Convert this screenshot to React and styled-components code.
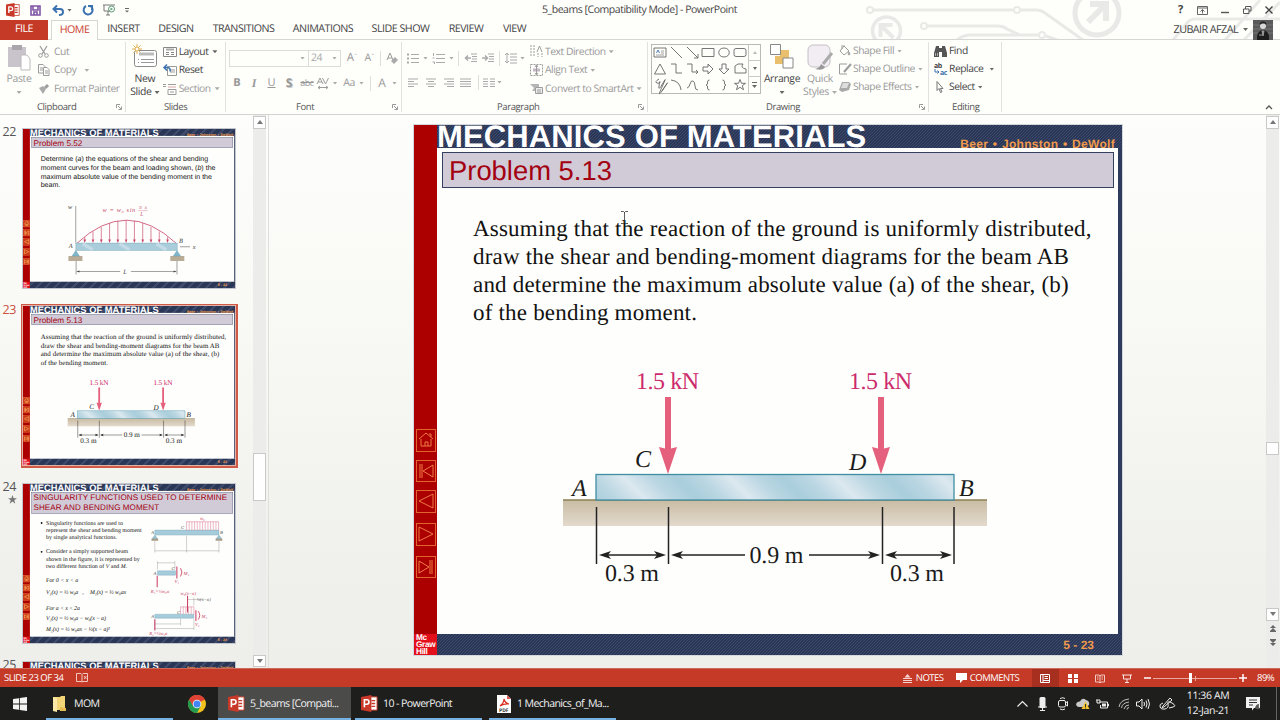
import React from 'react';
import styled, { createGlobalStyle } from 'styled-components';

const GlobalStyle = createGlobalStyle`
  * { box-sizing: border-box; }
  body {
    margin: 0;
    overflow: hidden;
    font-family: 'Open Sans', 'Noto Sans', sans-serif;
    color: #444;
    text-rendering: geometricPrecision;
  }
  svg { display: block; flex: none; overflow: visible; }
`;

const Window = styled.div`
  width: 1280px;
  height: 720px;
  display: flex;
  flex-direction: column;
  background: #fefefb;
  position: relative;
  overflow: hidden;
`;

/* ---------- shared bits ---------- */

const Caret = styled.span`
  flex: none;
  width: 5px;
  height: 3px;
  margin-left: ${(p) => p.$ml || 0}px;
  background: ${(p) => (p.$on ? '#666' : '#ababab')};
  clip-path: polygon(0 0, 100% 0, 50% 100%);
`;

const Text = styled.span`
  white-space: nowrap;
  font-size: ${(p) => p.$size || 11}px;
  letter-spacing: ${(p) => p.$ls || 0}px;
  line-height: 14px;
`;

const Icon = ({ w = 14, h = 14, children, color = '#9c9c9c', sw = 1 }) => (
  <svg width={w} height={h} viewBox={`0 0 ${w} ${h}`} fill="none" stroke={color} strokeWidth={sw}>
    {children}
  </svg>
);

/* ---------- title bar and tabs ---------- */

const Circuit = styled.svg`
  position: absolute;
  left: 860px;
  top: 0;
  && { overflow: hidden; }
`;

const TitleBar = styled.div`
  height: 20px;
  display: flex;
  align-items: center;
  position: relative;
`;

const QuickAccess = styled.div`
  width: 535px;
  padding-left: 6px;
  display: flex;
  align-items: center;
`;

const Slot = styled.div`
  width: ${(p) => p.$w}px;
  height: ${(p) => (p.$h ? `${p.$h}px` : 'auto')};
  flex: none;
  display: flex;
  align-items: center;
  justify-content: ${(p) => p.$justify || 'flex-start'};
`;

const DocTitle = styled.div`
  width: 209px;
  text-align: center;
  font-size: 10.5px;
  letter-spacing: -0.46px;
  line-height: 18px;
  white-space: nowrap;
`;

const WindowButtons = styled.div`
  margin-left: auto;
  display: flex;
  align-items: center;
  padding-right: 7px;
`;

const TabBar = styled.div`
  height: 20px;
  display: flex;
  position: relative;
  border-bottom: 1px solid #d6d6d4;
`;

const Tab = styled.div`
  width: ${(p) => p.$w}px;
  height: 20px;
  line-height: 19px;
  text-align: center;
  font-size: 10.7px;
  letter-spacing: ${(p) => p.$ls ?? -0.5}px;
  white-space: nowrap;
  color: #444;
`;

const FileTab = styled(Tab)`
  background: #c43a27;
  color: #fff;
  margin-right: 3px;
`;

const ActiveTab = styled(Tab)`
  color: #cb3f2f;
  background: #fefefb;
  border: 1px solid #d6d6d4;
  border-bottom: none;
  line-height: 18px;
`;

const Account = styled.div`
  margin-left: auto;
  display: flex;
  align-items: center;
  padding-right: 7px;
`;

/* ---------- ribbon ---------- */

const Ribbon = styled.div`
  height: 75px;
  flex: none;
  display: flex;
  border-bottom: 1px solid #d3d3d1;
  position: relative;
`;

const Group = styled.div`
  width: ${(p) => p.$w}px;
  height: 74px;
  display: flex;
  flex-direction: column;
  position: relative;
  &::after {
    content: '';
    position: absolute;
    right: 0;
    top: 2px;
    height: 70px;
    border-right: 1px solid #e1e1df;
  }
`;

const GroupBody = styled.div`
  height: 60px;
  display: flex;
  padding-left: ${(p) => p.$pl}px;
`;

const GroupFoot = styled.div`
  height: 14px;
  display: flex;
  align-items: center;
  justify-content: space-between;
  padding: 0 4px 0 ${(p) => p.$pl}px;
  font-size: 9.5px;
  line-height: 14px;
  letter-spacing: -0.4px;
  color: #555;
`;

const BigButton = styled.div`
  width: ${(p) => p.$w}px;
  height: 60px;
  padding-top: 4px;
  display: flex;
  flex-direction: column;
  align-items: center;
  font-size: 10.4px;
  line-height: 13px;
  letter-spacing: -0.35px;
  color: ${(p) => (p.$on ? '#444' : '#999')};
  > svg { margin-bottom: 2px; }
`;

const Line = styled.div`
  display: flex;
  align-items: center;
  white-space: nowrap;
  min-height: ${(p) => p.$h || 13}px;
`;

const Stack = styled.div`
  width: ${(p) => p.$w}px;
  padding-top: ${(p) => p.$pt ?? 2.5}px;
  margin-left: ${(p) => p.$ml || 0}px;
`;

const Command = styled.div`
  height: ${(p) => p.$h || 18.5}px;
  display: flex;
  align-items: center;
  gap: ${(p) => p.$gap ?? 3}px;
  font-size: 10.3px;
  letter-spacing: ${(p) => p.$ls ?? -0.45}px;
  white-space: nowrap;
  color: ${(p) => (p.$on ? '#444' : '#999')};
`;

const ToolRow = styled.div`
  height: ${(p) => p.$h || 24}px;
  display: flex;
  align-items: center;
  color: #999;
`;

const Combo = styled.div`
  width: ${(p) => p.$w}px;
  height: 17px;
  border: 1px solid #dcdcda;
  margin-right: -1px;
  padding: 0 3px 0 2px;
  display: flex;
  align-items: center;
  justify-content: space-between;
  font-size: 11px;
  color: #aaa;
`;

const Sep = styled.span`
  width: 1px;
  height: 15px;
  background: #dededc;
`;

const Glyph = styled.span`
  font-size: ${(p) => p.$size || 11}px;
  font-weight: ${(p) => (p.$bold ? 700 : 400)};
  font-style: ${(p) => (p.$italic ? 'italic' : 'normal')};
  font-family: ${(p) => (p.$serif ? "'Liberation Serif', serif" : 'inherit')};
  text-decoration: ${(p) => p.$deco || 'none'};
  line-height: 14px;
  letter-spacing: ${(p) => p.$ls || 0}px;
  text-shadow: ${(p) => (p.$shadow ? '1px 1px 0 #ccc' : 'none')};
`;

const Gallery = styled.div`
  width: 110px;
  height: 50px;
  margin-top: 4px;
  border: 1px solid #b9b9b7;
  display: flex;
`;

const GalleryScroll = styled.div`
  width: 12px;
  display: grid;
  grid-template-rows: repeat(3, 1fr);
  div {
    border-left: 1px solid #c9c9c7;
    border-bottom: 1px solid #c9c9c7;
    display: flex;
    align-items: center;
    justify-content: center;
  }
  div:last-child { border-bottom: none; }
`;

const Collapse = styled.div`
  margin-left: auto;
  padding: 65px 8px 0 0;
`;

const Launcher = () => (
  <Icon w={6} h={6} color="#999">
    <path d="M.5 4V.5H4M2 2l3 3M5.5 2.5v3h-3" />
  </Icon>
);

const lines = (ys, x1 = 1, x2 = 11) => ys.map((y) => `M${x1} ${y}H${x2}`).join('');

const PowerPointIcon = ({ size = 14 }) => (
  <svg width={size} height={size} viewBox="0 0 18 18">
    <path d="M9 2h8v14H9z" fill="#fff" stroke="#c43a27" />
    <path d="M11 6h4M11 9h4M11 12h4" stroke="#c43a27" strokeWidth="1.4" />
    <path d="M0 2l11-2v18L0 16z" fill="#c8392a" />
    <path d="M3.6 13V5h2.500a2.300 2.300 0 010 4.800H3.600" fill="none" stroke="#fff" strokeWidth="1.700" />
  </svg>
);

function Header() {
  return (
    <>
      <Circuit width="420" height="39" fill="none" stroke="#e9e9e7" strokeWidth="3">
        <path d="M13 10H153M161 10h16q4 0 8 3l38 27M67 26h71q5 0 9 3l13 6h20M186 36l14 5M96 41q6-6 14-6h68" />
        <path d="M313 40l14-17q3-4 8-4h85M365 40l35-40M384 40l36-38" />
        <circle cx="10" cy="10" r="3" strokeWidth="2" />
        <circle cx="157" cy="10" r="3" strokeWidth="2" fill="#fefefb" />
        <circle cx="64" cy="26" r="3" strokeWidth="2" fill="#fefefb" />
        <circle cx="182" cy="35" r="3" strokeWidth="2" fill="#fefefb" />
        <g transform="translate(26.500 31)">
          <circle r="14" fill="#fefefb" strokeWidth="3.500" />
          <path d="M7 7L-5-5M-6 6V-6H6" strokeWidth="4" />
        </g>
        <g transform="translate(237 13)">
          <circle r="22" fill="#fefefb" strokeWidth="5" />
          <path d="M-9 9L7-7M-7-9H9V8" strokeWidth="6" />
        </g>
      </Circuit>
      <TitleBar>
        <QuickAccess>
          <Slot $w={24}><PowerPointIcon /></Slot>
          <Slot $w={22}>
            <Icon w={11} h={11} color="#8055a5" sw={1.6}><path d="M1 1h9v9H1zM3 1v4h5V1M4 10V7h3v3" /></Icon>
          </Slot>
          <Slot $w={30}>
            <Icon w={12} h={11} color="#3b73b0" sw={2}><path d="M1.500 4H8q3 0 3 3t-4 3M5 0.500L1.500 4 5 7.500" /></Icon>
            <Caret $on $ml={3} />
          </Slot>
          <Slot $w={21}>
            <Icon w={12} h={12} color="#3b73b0" sw={2}><path d="M4 2A4.500 4.500 0 109 2.500M6 2h4v4" /></Icon>
          </Slot>
          <Slot $w={22}>
            <Icon w={13} h={12} color="#777"><path d="M0 1h12M1 1v6h6M5 7v4M3 11h4" /><circle cx="8.500" cy="5" r="3" stroke="#5c9b76" /><path d="M7.500 3.500L10 5 7.500 6.500z" fill="#5c9b76" stroke="none" /></Icon>
          </Slot>
          <Icon w={4} h={5} color="#666"><path d="M0 .5h4" /><path d="M0 2.500h4L2 4.500z" fill="#666" stroke="none" /></Icon>
        </QuickAccess>
        <DocTitle>5_beams [Compatibility Mode] - PowerPoint</DocTitle>
        <WindowButtons>
          <Slot $w={19}><Glyph $bold $size={11}>?</Glyph></Slot>
          <Slot $w={24}>
            <Icon w={11} h={9} color="#666"><path d="M.5.5h10v8H.5zM.5 2h10M5.500 7.500V3.500M3.500 5.500l2-2 2 2" /></Icon>
          </Slot>
          <Slot $w={22}><Icon w={9} h={7} color="#555" sw={1.4}><path d="M0 5.500h8" /></Icon></Slot>
          <Slot $w={22}>
            <Icon w={9} h={8} color="#555"><path d="M.5 3h5.500v4.500H.5zM2.500 3V.5H8v4.500H6" /></Icon>
          </Slot>
          <Icon w={8} h={8} color="#444" sw={1.4}><path d="M.5.5l7 7M7.500.5l-7 7" /></Icon>
        </WindowButtons>
      </TitleBar>
      <TabBar>
        <FileTab $w={48}>FILE</FileTab>
        <ActiveTab $w={47}>HOME</ActiveTab>
        <Tab $w={51}>INSERT</Tab>
        <Tab $w={54}>DESIGN</Tab>
        <Tab $w={81}>TRANSITIONS</Tab>
        <Tab $w={78}>ANIMATIONS</Tab>
        <Tab $w={77}>SLIDE SHOW</Tab>
        <Tab $w={54}>REVIEW</Tab>
        <Tab $w={43}>VIEW</Tab>
        <Account>
          <Text $size={10.8} $ls={-0.58}>ZUBAIR AFZAL</Text>
          <Caret $on $ml={5} />
          <svg width="20" height="20" viewBox="0 0 20 20" style={{ marginLeft: 5 }}>
            <rect width="20" height="20" fill="#5a5a5a" />
            <path d="M0 5h20M0 9h20M0 13h20" stroke="#747474" />
            <path d="M4 20q-1-9 6-10 7 1 6 10z" fill="#1d1d1d" />
            <circle cx="10" cy="6" r="3" fill="#d8d8d8" />
            <path d="M6.500 5q0-3.500 3.500-3.500t3.500 3.500l-2-1.500H9z" fill="#222" />
            <path d="M9 11l1 5 1-5zM6 15h3" fill="#aaa" stroke="#999" />
          </svg>
        </Account>
      </TabBar>
    </>
  );
}

const shapes = [
  <g key="a"><path d="M0 1h12v9H0z" /><path d="M7 4h3M7 6h3M2 8h8" stroke="#999" /><path d="M2.500 6L4 3l1.500 3" stroke="#3b6fb0" /></g>,
  'M1 0l11 11',
  'M1 0l11 11M12 7v4H8',
  'M0 1.500h12v8H0z',
  'M6 1c7 0 7 9 0 9s-7-9 0-9z',
  'M2 1.500h8q2 0 2 2v4q0 2-2 2H2q-2 0-2-2v-4q0-2 2-2z',
  'M6 1l5.500 10H.5z',
  'M1 1h5v9h6',
  'M1 1h5v8h6M10 7l2 2-2 2',
  'M1 4h5V1l5 5-5 5V8H1z',
  'M4 1h4v5h3l-5 5-5-5h3z',
  'M1 10V3l3-2h5Q6 5 12 6v4z',
  'M5 0Q0 3 3 4t3-1-1 4 4-3-1 4 2 1-2 3',
  'M1 1q9 1 10 10',
  'M1 9q2 0 3-4t3-3 2 5 3 4',
  'M7.500 1Q5.500 1 5.500 3v2L4 6l1.500 1v2q0 2 2 2',
  'M4.500 1q2 0 2 2v2L8 6 6.500 7v2q0 2-2 2',
  'M6 .5l1.500 3.800h4L8.300 6.700l1.200 4L6 8.300l-3.500 2.400 1.200-4L.5 4.300h4z',
];

function RibbonBar() {
  return (
    <Ribbon>
      <Group $w={126}>
        <GroupBody $pl={4}>
          <BigButton $w={30}>
            <svg width="24" height="27" viewBox="0 0 24 27">
              <path d="M1 3h18v20H1z" fill="#c9c4cc" />
              <path d="M5 1h10v5H5z" fill="#a9a6ab" />
              <path d="M14 11h6l3 4v11h-9z" fill="#fff" stroke="#bbb" />
            </svg>
            <Line>Paste</Line>
            <Line><Caret /></Line>
          </BigButton>
          <Stack $ml={4} $w={85}>
            <Command $gap={4}>
              <Icon w={12} h={12}><path d="M2 0l5 8M9 0L4 8" strokeWidth="1.300" /><circle cx="2.500" cy="9.500" r="1.800" /><circle cx="8.500" cy="9.500" r="1.800" /></Icon>
              Cut
            </Command>
            <Command $gap={4}>
              <Icon w={12} h={12}><path d="M.5.5H5l2 2V9H.5zM2 4h3M2 6h3" /><path d="M5.500 3.500H9l2 2v6H5.500z" fill="#fefefb" /><path d="M7 7h3M7 9h3" /></Icon>
              <span>Copy</span><Caret $ml={4} />
            </Command>
            <Command $gap={4}>
              <Icon w={12} h={12}><path d="M1 5l4-2 3 3-3 5z" fill="#aaa" stroke="none" /><path d="M7 5l3-3" strokeWidth="3" /></Icon>
              Format Painter
            </Command>
          </Stack>
        </GroupBody>
        <GroupFoot $pl={37}><span>Clipboard</span><Launcher /></GroupFoot>
      </Group>

      <Group $w={100}>
        <GroupBody $pl={3}>
          <BigButton $w={32} $on>
            <svg width="26" height="27" viewBox="0 0 26 27" fill="none">
              <rect x="2.500" y="6.500" width="22" height="16" rx="2" stroke="#8a8a8a" fill="#fff" />
              <path d="M7 10h15" stroke="#bbb" strokeWidth="3" />
              <path d="M6 15.500h1M9 15.500h13M6 18.500h1M9 18.500h13" stroke="#999" />
              <path d="M5 0v10M0 5h10M1.500 1.500l7 7M8.500 1.500l-7 7" stroke="#e3b04f" />
              <circle cx="5" cy="5" r="2" fill="#fff" stroke="#e3b04f" />
            </svg>
            <Line>New</Line>
            <Line>Slide<Caret $on $ml={3} /></Line>
          </BigButton>
          <Stack $ml={2} $w={64}>
            <Command $on $gap={2}>
              <Icon w={14} h={12} color="#888"><path d="M.5 1.500h13v9H.5z" /><path d="M3 3.500h8" strokeWidth="2" stroke="#aaa" /><path d="M3 6.500h3M3 8.500h3M8 6.500h3M8 8.500h3" /></Icon>
              <span>Layout</span><Caret $on $ml={2} />
            </Command>
            <Command $on $gap={2}>
              <Icon w={14} h={12} color="#999"><path d="M4.500 2.500h9v9h-9zM7 6h5M7 8h5" /><path d="M1 3.500h4q3 1 2 4M4 0.500l-3 3 3 3" stroke="#3b73b0" strokeWidth="1.500" /></Icon>
              Reset
            </Command>
            <Command $gap={2}>
              <Icon w={14} h={12}><path d="M0 1.500h3M5 1.500h8M0 3.500h3M5 6.500h8v5H5z" /><path d="M5 4h8" stroke="#d9a7a7" /><path d="M7 9h4" /></Icon>
              <span>Section</span><Caret $ml={2} />
            </Command>
          </Stack>
        </GroupBody>
        <GroupFoot $pl={38}><span>Slides</span></GroupFoot>
      </Group>

      <Group $w={176}>
        <GroupBody $pl={3}>
          <Stack $w={172} $pt={6}>
            <ToolRow>
              <Combo $w={80}><span /><Caret /></Combo>
              <Combo $w={33}><Text $size={10.5} $ls={-0.4}>24</Text><Caret /></Combo>
              <Slot $w={17} $justify="flex-end"><Glyph $size={11.5}>A</Glyph><Glyph $size={7}>ˆ</Glyph></Slot>
              <Slot $w={17} $justify="flex-end"><Glyph $size={10.5}>A</Glyph><Glyph $size={7}>ˇ</Glyph></Slot>
              <Slot $w={12} $justify="center"><Sep /></Slot>
              <Icon w={12} h={13}><path d="M1 8L4 1l3 7M2 6h4" /><path d="M5 9l4-4 3 3-4 4z" fill="#aaa" stroke="none" /></Icon>
            </ToolRow>
            <ToolRow $h={26}>
              <Slot $w={16} $justify="center"><Glyph $bold>B</Glyph></Slot>
              <Slot $w={18} $justify="center"><Glyph $italic $serif $bold $size={12}>I</Glyph></Slot>
              <Slot $w={17} $justify="center"><Glyph $deco="underline">U</Glyph></Slot>
              <Slot $w={18} $justify="center"><Glyph $bold $shadow $size={12}>S</Glyph></Slot>
              <Slot $w={18} $justify="center"><Glyph $deco="line-through" $size={9} $ls={-0.5}>abc</Glyph></Slot>
              <Slot $w={14} $justify="center">
                <Icon w={12} h={12}><path d="M0 7l3-6 3 6M1 5h4M5.500 1l3 6 3-6M1 10.500h10M3 9l-2 1.500L3 12M9 9l2 1.500L9 12" /></Icon>
              </Slot>
              <Slot $w={10} $justify="center"><Caret /></Slot>
              <Slot $w={18} $justify="center"><Glyph $size={10.5} $ls={-0.5}>Aa</Glyph></Slot>
              <Slot $w={8}><Caret $ml={1} /></Slot>
              <Slot $w={9} $justify="center"><Sep /></Slot>
              <Slot $w={14} $justify="center"><Glyph $size={12}>A</Glyph></Slot>
              <Slot $w={8} $justify="flex-end"><Caret /></Slot>
            </ToolRow>
          </Stack>
        </GroupBody>
        <GroupFoot $pl={70}><span>Font</span><Launcher /></GroupFoot>
      </Group>

      <Group $w={246}>
        <GroupBody $pl={5}>
          <Stack $w={122} $pt={6}>
            <ToolRow>
              <Slot $w={16}><Icon w={12} h={11} color="#aaa"><path d={lines([1.5, 5.5, 9.5], 4, 12)} /><path d="M0 1.500h2M0 5.500h2M0 9.500h2" strokeWidth="2" /></Icon></Slot>
              <Slot $w={9}><Caret /></Slot>
              <Slot $w={17}><Icon w={13} h={11} color="#aaa"><path d={lines([1.5, 5.5, 9.5], 4, 13)} /><path d="M1.500 0v3M0.500 5h2M0.500 9h2v2" /></Icon></Slot>
              <Slot $w={9}><Caret /></Slot>
              <Slot $w={7}><Sep /></Slot>
              <Slot $w={17}><Icon w={12} h={10} color="#aaa"><path d="M6 1h6M7 3.500h5M7 6h5M6 8.500h6" /><path d="M0 5h6M3 2.500L.5 5 3 7.500" strokeWidth="1.500" /></Icon></Slot>
              <Slot $w={17}><Icon w={12} h={10} color="#aaa"><path d="M6 1h6M7 3.500h5M7 6h5M6 8.500h6" /><path d="M0 5h5M3 2.500L5.500 5 3 7.500" strokeWidth="1.500" /></Icon></Slot>
              <Slot $w={6}><Sep /></Slot>
              <Slot $w={15}><Icon w={12} h={12} color="#aaa"><path d="M5 2h7M5 5h7M5 8h7M5 11h7M2 1v10M0 3l2-2 2 2M0 9l2 2 2-2" /></Icon></Slot>
              <Caret />
            </ToolRow>
            <ToolRow>
              <Slot $w={18}><Icon w={11} h={9} color="#aaa"><path d="M1 1h10M1 3.500h6M1 6h10M1 8.500h6" /></Icon></Slot>
              <Slot $w={18}><Icon w={11} h={9} color="#aaa"><path d="M1 1h10M3 3.500h6M1 6h10M3 8.500h6" /></Icon></Slot>
              <Slot $w={17}><Icon w={11} h={9} color="#aaa"><path d="M1 1h10M4 3.500h7M1 6h10M4 8.500h7" /></Icon></Slot>
              <Slot $w={18}><Icon w={11} h={9} color="#aaa"><path d="M0 1h11M0 3.500h11M0 6h11M0 8.500h11" /></Icon></Slot>
              <Slot $w={5}><Sep /></Slot>
              <Slot $w={14}><Icon w={12} h={9} color="#aaa"><path d="M0 1h5M0 3.500h5M0 6h5M0 8.500h5M7 1h5M7 3.500h5M7 6h5M7 8.500h5" /></Icon></Slot>
              <Caret />
            </ToolRow>
          </Stack>
          <Stack $w={116} $ml={1}>
            <Command $gap={2}>
              <Icon w={13} h={13}><path d="M1 0v12M4 0v12M8 8v4M12 8v4" strokeDasharray="2 1" /><path d="M7 7l2.500-6L12 7" /></Icon>
              <span>Text Direction</span><Caret $ml={1} />
            </Command>
            <Command $gap={2}>
              <Icon w={13} h={12}><path d="M.5.5h12v11H.5z" strokeDasharray="2 1" /><path d="M3 6h7" stroke="#c5b7c5" strokeWidth="3" /><path d="M6.500 1v10M5 3l1.500-2L8 3M5 9l1.500 2L8 9" /></Icon>
              <span>Align Text</span><Caret $ml={1} />
            </Command>
            <Command $gap={2} $ls={-0.4}>
              <Icon w={13} h={11}><path d="M0 1h9v3H5v4H2l2-3z" fill="#b5b5b5" stroke="none" /><path d="M5.500 4.500h7v6h-7z" fill="#eee" /><path d="M7 7h4M7 9h4" /></Icon>
              <span>Convert to SmartArt</span><Caret $ml={1} />
            </Command>
          </Stack>
        </GroupBody>
        <GroupFoot $pl={95}><span>Paragraph</span><Launcher /></GroupFoot>
      </Group>

      <Group $w={281}>
        <GroupBody $pl={3}>
          <Gallery>
            <svg width="96" height="48" viewBox="0 0 96 48" fill="none" stroke="#666" strokeWidth=".9">
              {shapes.map((d, i) => (
                <g key={i} transform={`translate(${2 + (i % 6) * 16} ${2 + Math.floor(i / 6) * 16})`}>
                  {typeof d === 'string' ? <path d={d} /> : d}
                </g>
              ))}
            </svg>
            <GalleryScroll>
              <div><Icon w={4} h={3}><path d="M0 3l2-3 2 3z" fill="#bbb" stroke="none" /></Icon></div>
              <div><Icon w={4} h={3}><path d="M0 0h4L2 3z" fill="#666" stroke="none" /></Icon></div>
              <div><Icon w={5} h={6} color="#666"><path d="M0 .5h5" /><path d="M0 3h5L2.500 6z" fill="#666" stroke="none" /></Icon></div>
            </GalleryScroll>
          </Gallery>
          <BigButton $w={42} $on>
            <svg width="24" height="27" viewBox="0 0 24 27">
              <path d="M10 6h9v9h-9zM5 12h9v8H5z" fill="#e9bf6d" />
              <path d="M.5.5h10v10H.5zM13 14h10v10H13z" fill="#fff" stroke="#888" />
            </svg>
            <Line>Arrange</Line>
            <Line><Caret $on /></Line>
          </BigButton>
          <BigButton $w={34}>
            <svg width="26" height="27" viewBox="0 0 26 27">
              <rect x="1" y="1" width="22" height="22" rx="5" fill="#f2edf3" stroke="#c5c0c6" />
              <path d="M25 9L16 20" stroke="#aaa" strokeWidth="3" />
              <path d="M8 25q5-1 6-5l4 3q-2 4-10 2z" fill="#999" />
            </svg>
            <Line>Quick</Line>
            <Line>Styles<Caret $ml={3} /></Line>
          </BigButton>
          <Stack $w={88} $ml={2} $pt={2}>
            <Command $h={18} $gap={2}>
              <Icon w={12} h={12}><path d="M5 1l5 5-5 4-4-4zM5 1V0M3 4V0" /><path d="M10 7q2 3 0 3t0-3" /></Icon>
              <span>Shape Fill</span><Caret $ml={1} />
            </Command>
            <Command $h={18} $gap={2}>
              <Icon w={12} h={12}><path d="M8 1H.5v10H8" /><path d="M12 1L5 9" strokeWidth="2" /></Icon>
              <span>Shape Outline</span><Caret $ml={1} />
            </Command>
            <Command $h={18} $gap={2}>
              <Icon w={12} h={12}><path d="M3 1h7l2 2-2 6-7 2-3-2z" fill="#a9a9a9" stroke="none" /><path d="M4 2h6L8 7H2z" fill="#ddd" stroke="none" /></Icon>
              <span>Shape Effects</span><Caret $ml={1} />
            </Command>
          </Stack>
        </GroupBody>
        <GroupFoot $pl={118}><span>Drawing</span><Launcher /></GroupFoot>
      </Group>

      <Group $w={73}>
        <GroupBody $pl={5}>
          <Stack $w={66} $pt={2}>
            <Command $on $h={18} $gap={2}>
              <svg width="13" height="11" viewBox="0 0 13 11"><path d="M2 0h3v2h3V0h3l2 7v4H8V6H5v5H0V7z" fill="#555" /><path d="M1.500 7v3M3.500 7v3" stroke="#aaa" /></svg>
              Find
            </Command>
            <Command $on $h={18} $gap={2}>
              <Icon w={13} h={12} color="#3b73b0">
                <text x="0" y="5" fontSize="7" fill="#444" stroke="none" fontWeight="700">ab</text>
                <text x="6" y="11.500" fontSize="7" fill="#3b73b0" stroke="none" fontWeight="700">ac</text>
                <path d="M1 6v3h4M3.500 7.500L5 9l-1.500 1.500" />
              </Icon>
              <span>Replace</span><Caret $on $ml={4} />
            </Command>
            <Command $on $h={18} $gap={2}>
              <Icon w={13} h={12} color="#777"><path d="M3 .5v9l2-2 1.500 4 1.500-.7-1.600-3.300H9z" /></Icon>
              <span>Select</span><Caret $on $ml={1} />
            </Command>
          </Stack>
        </GroupBody>
        <GroupFoot $pl={23}><span>Editing</span></GroupFoot>
      </Group>
      <Collapse>
        <Icon w={6} h={4} color="#555" sw={1.3}><path d="M0 4l3-3 3 3" /></Icon>
      </Collapse>
    </Ribbon>
  );
}

/* ---------- slides ---------- */

const navy = 'repeating-linear-gradient(135deg, #2a3656 0, #2a3656 1.4px, #3d4a6c 1.4px, #3d4a6c 2.120px)';

const SlideRoot = styled.div`
  width: 708px;
  height: 530px;
  display: flex;
  background: #fefefc;
  overflow: hidden;
  color: #111;
`;

const RedStrip = styled.div`
  width: 23px;
  flex: none;
  background: #ac0000;
  display: flex;
  flex-direction: column;
`;

const SlideMain = styled.div`
  width: 685px;
  display: flex;
  flex-direction: column;
`;

const Banner = styled.div`
  height: 23px;
  flex: none;
  background: ${navy};
  display: flex;
  justify-content: space-between;
  overflow: hidden;
  font-family: 'Liberation Sans', Arial, sans-serif;
  font-weight: 700;
  white-space: nowrap;
`;

const BannerTitle = styled.div`
  color: #fff;
  font-size: 31px;
  line-height: 23px;
  letter-spacing: 0.13px;
`;

const BannerAuthors = styled.div`
  color: #f09a4c;
  font-size: 12px;
  line-height: 14px;
  letter-spacing: 0.3px;
  padding: 12px 7px 0 0;
  word-spacing: 1px;
`;

const SlideBody = styled.div`
  height: 485.500px;
  border-right: 4px solid #2f3b5c;
  display: flex;
  flex-direction: column;
`;

const SlideTitle = styled.div`
  margin: 4px 4px 0 5px;
  height: ${(p) => p.$h || 36}px;
  flex: none;
  border: 1px solid #33405f;
  background: #d1cbd8;
  color: #a30010;
  font-family: 'Liberation Sans', Arial, sans-serif;
  font-size: ${(p) => p.$size || 27.4}px;
  line-height: ${(p) => p.$lh || 35}px;
  letter-spacing: ${(p) => p.$ls || 0}px;
  padding-left: 6px;
  white-space: nowrap;
`;

const SlideFooter = styled.div`
  height: 21.500px;
  background: ${navy};
  display: flex;
  justify-content: flex-end;
  padding-right: 28px;
  color: #f09a4c;
  font: 700 12px/23px 'Liberation Sans', Arial, sans-serif;
`;

const Paragraph = styled.div`
  font-family: ${(p) => (p.$sans ? "'Liberation Sans', Arial, sans-serif" : "'Liberation Serif', 'Times New Roman', serif")};
  font-size: ${(p) => p.$size}px;
  line-height: ${(p) => p.$lh}px;
  letter-spacing: ${(p) => p.$ls || 0}px;
  padding: ${(p) => p.$pad};
  white-space: pre;
`;

const NavButton = styled.div`
  width: 20px;
  height: 22.500px;
  margin: ${(p) => p.$mt}px 0 0 2px;
  border: 1px solid ${(p) => (p.$small ? '#ff9a4a' : '#e2632f')};
  background: ${(p) => (p.$small ? '#c83c18' : 'transparent')};
  display: flex;
  align-items: center;
  justify-content: center;
`;

const Publisher = styled.div`
  margin-top: auto;
  height: 21.500px;
  background: #e3101c;
  color: #fff;
  font: 700 8.3px/7px 'Liberation Sans', Arial, sans-serif;
  padding: 0.5px 0 0 2px;
  letter-spacing: -0.35px;
  overflow: hidden;
`;

const navIcons = [
  'M1 8l7-6 7 6M3 8v7h10V8M7 15v-4h3v4M11 3h2v3',
  'M2 2v14M4 2v14M15 3L5 9l10 6z',
  'M15 2L1 9l14 7z',
  'M1 2v14l14-7z',
  'M1 3v12l10-6zM12 2v14M14 2v14',
];
const navOffsets = [304, 8, 8, 10.5, 10];

function Slide({ small, number, children }) {
  return (
    <SlideRoot>
      <RedStrip>
        {navIcons.map((d, i) => (
          <NavButton key={d} $mt={navOffsets[i]} $small={small}>
            <svg width="16" height="18" viewBox="0 0 16 18" fill="none" stroke={small ? '#ffb060' : '#f07a45'} strokeWidth={small ? 2 : 1}>
              <path d={d} />
            </svg>
          </NavButton>
        ))}
        <Publisher>Mc<br />Graw<br />Hill</Publisher>
      </RedStrip>
      <SlideMain>
        <Banner>
          <BannerTitle>MECHANICS OF MATERIALS</BannerTitle>
          <BannerAuthors>Beer • Johnston • DeWolf</BannerAuthors>
        </Banner>
        <SlideBody>{children}</SlideBody>
        <SlideFooter>5 - {number}</SlideFooter>
      </SlideMain>
    </SlideRoot>
  );
}

const DimArrow = ({ x1, x2, y, left = true, right = true }) => (
  <g>
    <path d={`M${x1 + 3} ${y}H${x2 - 3}`} stroke="#222" strokeWidth="1.500" />
    {left && <path d={`M${x1} ${y}l12-4-3 4 3 4z`} fill="#222" />}
    {right && <path d={`M${x2} ${y}l-12-4 3 4-3 4z`} fill="#222" />}
  </g>
);

const Load = ({ x }) => (
  <path d={`M${x - 3} 397h6v51.500l6-1.500-9 27-9-27 6 1.500z`} fill="#e5607c" />
);

function BeamOnGround({ id }) {
  return (
    <svg width="681" height="290" viewBox="437 328 681 290" fontFamily="'Liberation Serif', serif" fontSize="24" fill="#1a1a1a">
      <defs>
        <linearGradient id={`steel-${id}`} gradientUnits="userSpaceOnUse" x1="633" y1="487" x2="659.500" y2="460.500" spreadMethod="reflect">
          <stop offset="0" stopColor="#dce8ef" />
          <stop offset=".55" stopColor="#b9d6e2" />
          <stop offset="1" stopColor="#aacedc" />
        </linearGradient>
        <linearGradient id={`soil-${id}`} x1="0" y1="0" x2="0" y2="1">
          <stop offset="0" stopColor="#c9bca4" />
          <stop offset="1" stopColor="#e3dacd" />
        </linearGradient>
      </defs>
      <rect x="563" y="500" width="424" height="26" fill={`url(#soil-${id})`} />
      <path d="M563 500h424" stroke="#8d7f55" strokeWidth="1.300" />
      <rect x="596" y="474.500" width="358" height="25.500" fill={`url(#steel-${id})`} stroke="#3f8ea3" strokeWidth="1.300" />
      <Load x={668} />
      <Load x={881} />
      <path d="M596.500 507v57M668.500 507v57M882.500 507v57M954 507v57" stroke="#222" strokeWidth="1.500" />
      <DimArrow x1={599} x2={666} y={555} />
      <DimArrow x1={671} x2={748} y={555} right={false} />
      <DimArrow x1={806} x2={880} y={555} left={false} />
      <DimArrow x1={885} x2={952} y={555} />
      <g fill="#cc2a6b">
        <text x="636" y="389" textLength="63">1.5 kN</text>
        <text x="849" y="389" textLength="63">1.5 kN</text>
      </g>
      <text x="605" y="580.500" textLength="54">0.3 m</text>
      <text x="749.500" y="562.500" textLength="54">0.9 m</text>
      <text x="890" y="580.500" textLength="54">0.3 m</text>
      <g fontStyle="italic">
        <text x="635" y="467">C</text>
        <text x="849" y="470">D</text>
        <text x="572" y="496">A</text>
        <text x="959" y="496">B</text>
      </g>
    </svg>
  );
}

function GroundSlide({ small }) {
  return (
    <Slide small={small} number={23}>
      <SlideTitle>Problem 5.13</SlideTitle>
      <Paragraph $size={23} $lh={28.3} $ls={0.2} $pad="26.5px 0 0 36px">
        {'Assuming that the reaction of the ground is uniformly distributed,\ndraw the shear and bending-moment diagrams for the beam AB\nand determine the maximum absolute value (a) of the shear, (b)\nof the bending moment.'}
      </Paragraph>
      <BeamOnGround id={small ? 'small' : 'main'} />
    </Slide>
  );
}

function SineLoadSlide() {
  const loads = [];
  for (let i = 1; i < 12; i++) {
    const x = 230 + i * 24.8 + 1;
    loads.push({ x, y: 376 - Math.sin((i * Math.PI) / 12) * 69 });
  }
  return (
    <Slide small number={22}>
      <SlideTitle>Problem 5.52</SlideTitle>
      <Paragraph $sans $size={23.5} $lh={29} $pad="22px 0 0 36px">
        Determine (<i>a</i>) the equations of the shear and bending{'\n'}
        moment curves for the beam and loading shown, (<i>b</i>) the{'\n'}
        maximum absolute value of the bending moment in the{'\n'}
        beam.
      </Paragraph>
      <svg width="681" height="304" viewBox="91.700 215 611.600 273" fill="none" fontFamily="'Liberation Serif', serif" fontStyle="italic" fontSize="19">
        <path d="M229 265v110M541 387h30M230 420v50M532 420v50M232 461h130M394 461h136" stroke="#444" strokeWidth="1.500" />
        <path d="M232 461l8-3v6zM530 461l-8-3v6z" fill="#444" />
        <path d="M232 377Q381 238 530 377" stroke="#c94a6c" strokeWidth="2.500" />
        {loads.map((l) => (
          <g key={l.x}>
            <path d={`M${l.x} ${l.y}V370`} stroke="#c94a6c" strokeWidth="2" />
            <path d={`M${l.x} 376l-4-11h8z`} fill="#c94a6c" />
          </g>
        ))}
        <path d="M207 415h42v15h-42zM512 415h42v15h-42z" fill="#b9ac97" />
        <path d="M229 398l-11 17h22zM532 398l-11 17h22z" fill="#7fb6cc" stroke="#5591a8" />
        <path d="M229 376h304v22H229z" fill="#aacddb" stroke="#5b96a8" />
        <path d="M250 378l30 18M360 378l30 18M470 378l30 18" stroke="#c3dbe6" strokeWidth="10" />
        <g fill="#444">
          <text x="206" y="275">w</text>
          <text x="208" y="392">A</text>
          <text x="538" y="375">B</text>
          <text x="579" y="393">x</text>
          <text x="371" y="469">L</text>
        </g>
        <g fill="#c94a6c">
          <text x="309" y="282" textLength="98">w = w₀ sin</text>
          <text x="418" y="274" fontSize="17" textLength="24">πx</text>
          <text x="422" y="296" fontSize="17">L</text>
        </g>
        <path d="M416 279h28" stroke="#c94a6c" />
      </svg>
    </Slide>
  );
}

const Columns = styled.div`
  display: flex;
`;

const Notes = styled.div`
  width: 395px;
  flex: none;
  padding: 18px 0 0 36px;
  font: 19.7px/24px 'Liberation Serif', serif;
  white-space: nowrap;
  ul { margin: 0; padding: 0 0 0 18px; }
  li { margin-bottom: 24px; }
  p { margin: 0 0 0 18px; }
`;

const Formula = styled.p`
  font-style: italic;
  letter-spacing: -0.5px;
  padding-top: ${(p) => p.$pt || 0}px;
`;

function SingularitySlide() {
  const bars = (x, y, n) => Array.from({ length: n }, (_, i) => `M${x + i * 8} ${y}v${y > 300 ? 22 : 26}`).join('');
  return (
    <Slide small number={24}>
      <SlideTitle $h={72} $size={27} $lh={34} $ls={0.2}>
        SINGULARITY FUNCTIONS USED TO DETERMINE<br />SHEAR AND BENDING MOMENT
      </SlideTitle>
      <Columns>
        <Notes>
          <ul>
            <li>Singularity functions are used to<br />represent the shear and bending moment<br />by single analytical functions.</li>
            <li>Consider a simply supported beam<br />shown in the figure, it is represented by<br />two different function of <i>V</i> and <i>M</i>.</li>
          </ul>
          <p>For <i>0 &lt; x &lt; a</i></p>
          <Formula $pt={16}>V₁(x) = ½ w₀a &nbsp; , &nbsp; &nbsp; M₁(x) = ½ w₀ax</Formula>
          <Formula $pt={30}>For a &lt; x &lt; 2a</Formula>
          <Formula $pt={8}>V₂(x) = ½ w₀a − w₀(x − a)</Formula>
          <Formula $pt={12}>M₂(x) = ½ w₀ax − ½(x − a)²</Formula>
        </Notes>
        <svg width="286" height="389" viewBox="447.700 116 257 349.300" fill="none" fontFamily="'Liberation Serif', serif" fontSize="14" fontStyle="italic">
          <path d="M467 165h192v15H467zM475 287h54v13h-54zM467 417h117v12H467z" fill="#a6cbdb" stroke="#6ba0b3" />
          <path d={`M562 140h96${bars(562, 140, 13)}M544 395h40${bars(544, 395, 6)}`} stroke="#dc7590" strokeWidth="1.500" />
          <path d="M467 180l-9 12h18zM659 180l-9 12h18z" fill="#9fc4d0" stroke="#6b98a7" />
          <path d="M457 191h20v6h-20zM649 191h20v6h-20z" fill="#a89c87" />
          <path d="M467 198v34M562 182v50M659 198v34M467 227h192M475 258v25M527 258v25M475 263h52M467 432v32M584 432v32M467 460h117M467 446h77M544 430v20M584 366v25M566 373h44" stroke="#777" />
          <path d="M474 336v-34M533 274v36M565 362v50M467 466v-34M590 405v32" stroke="#c8375f" strokeWidth="3" />
          <path d="M544 279q8 12 0 25M597 408q9 12 0 25" stroke="#c8375f" strokeWidth="2.500" />
          <g fill="#c8375f">
            <text x="602" y="134">w₀</text>
            <text x="553" y="298">M₁</text>
            <text x="526" y="324">V₁</text>
            <text x="455" y="354">R₁=½w₀a</text>
            <text x="544" y="360">w₀(x−a)</text>
            <text x="607" y="427">M₂</text>
            <text x="587" y="451">V₂</text>
            <text x="450" y="479">R₁=½w₀a</text>
          </g>
          <g fill="#555">
            <text x="456" y="178">A</text>
            <text x="545" y="162">C</text>
            <text x="662" y="178">B</text>
            <text x="463" y="298">A</text>
            <text x="517" y="284">C</text>
            <text x="456" y="427">A</text>
            <text x="533" y="416">C</text>
            <text x="592" y="378">½(x−a)</text>
          </g>
        </svg>
      </Columns>
    </Slide>
  );
}

/* ---------- workspace ---------- */

const Workspace = styled.div`
  height: 553px;
  flex: none;
  display: flex;
  overflow: hidden;
  background: linear-gradient(#fdfdfb, #f9f9f6 35%, #f0f1ed 80%, #eeefeb);
`;

const ThumbPane = styled.div`
  width: 253px;
  height: 553px;
  overflow: hidden;
  padding-top: 11px;
`;

const ThumbRow = styled.div`
  height: 177.700px;
  display: flex;
`;

const ThumbNumber = styled.div`
  width: 20.500px;
  padding: 0 0 0 2.5px;
  font-size: 12.5px;
  line-height: 12px;
  letter-spacing: -0.5px;
  color: ${(p) => (p.$active ? '#c9543f' : '#555')};
  svg { margin: 2px 0 0 5px; }
`;

const ThumbFrame = styled.div`
  width: 217px;
  height: 164.500px;
  border: 2px solid ${(p) => (p.$active ? '#cf5a45' : 'transparent')};
  padding: .5px;
`;

const ThumbClip = styled.div`
  width: 212px;
  height: 159px;
  overflow: hidden;
  outline: 1px solid ${(p) => (p.$active ? '#e3b3aa' : '#c3c6cd')};
`;

const ThumbScale = styled.div`
  width: 708px;
  height: 530px;
  transform: scale(0.3);
  transform-origin: 0 0;
`;

const Scrollbar = styled.div`
  width: 13px;
  height: 553px;
  flex: none;
  display: flex;
  flex-direction: column;
  background: #ecedea;
  margin-left: ${(p) => p.$ml || 0}px;
  padding: 1px 0;
`;

const ScrollBox = styled.div`
  height: ${(p) => p.$h || 12.5}px;
  margin-top: ${(p) => p.$mt || 0}px;
  flex: none;
  background: ${(p) => (p.$flat ? 'transparent' : '#fefefe')};
  border: 1px solid ${(p) => (p.$flat ? 'transparent' : '#c9c9c7')};
  display: flex;
  align-items: center;
  justify-content: center;
`;

const EditArea = styled.div`
  width: 997px;
  margin-left: 2px;
  border-left: 1px solid #dededb;
  padding: 10px 0 0 145px;
  position: relative;
`;

const SlideShadow = styled.div`
  width: 708px;
  height: 530px;
  outline: 1px solid #d4d7dc;
`;

const IBeam = styled.svg`
  position: absolute;
  left: 352px;
  top: 96px;
`;

const up = <path d="M0 4l3-4 3 4z" fill="#777" stroke="none" />;
const down = <path d="M0 0h6L3 4z" fill="#777" stroke="none" />;

const Thumb = ({ n, active, star, children }) => (
  <ThumbRow>
    <ThumbNumber $active={active}>
      {n}
      {star && (
        <svg width="9" height="9" viewBox="0 0 12 12"><path d="M6 0l1.500 4.200H12L8.400 7l1.300 4.500L6 8.800l-3.700 2.700L3.600 7 0 4.200h4.500z" fill="#777" /></svg>
      )}
    </ThumbNumber>
    <ThumbFrame $active={active}>
      <ThumbClip $active={active}><ThumbScale>{children}</ThumbScale></ThumbClip>
    </ThumbFrame>
  </ThumbRow>
);

/* ---------- status bar ---------- */

const StatusBar = styled.div`
  height: 19px;
  flex: none;
  background: #c43a27;
  border-top: 1px solid #cf6a5a;
  display: flex;
  align-items: center;
  color: #fff;
  padding-left: 4px;
`;

const StatusRight = styled.div`
  margin-left: auto;
  display: flex;
  align-items: center;
  height: 18px;
`;

const ViewButton = styled.div`
  width: 27.300px;
  height: 18px;
  display: flex;
  align-items: center;
  justify-content: center;
  background: ${(p) => (p.$active ? '#a72f1f' : 'transparent')};
`;

const ZoomTrack = styled.div`
  width: 84px;
  height: 11px;
  margin: 0 2px;
  display: flex;
  align-items: center;
  background: linear-gradient(#e9a79d, #e9a79d) center / 100% 1px no-repeat;
  i {
    width: 3px;
    height: 10px;
    margin-left: 36px;
    background: #fff;
  }
  b {
    width: 1px;
    height: 5px;
    margin-left: 3px;
    background: #e9a79d;
  }
`;

/* ---------- taskbar ---------- */

const Taskbar = styled.div`
  height: 33px;
  flex: none;
  background: #1e1e1d;
  display: flex;
  color: #f2f2f2;
`;

const Task = styled.div`
  width: ${(p) => p.$w}px;
  margin-left: ${(p) => p.$ml || 0}px;
  padding-left: ${(p) => p.$pl}px;
  height: 33px;
  display: flex;
  align-items: center;
  gap: ${(p) => p.$gap || 5}px;
  background: ${(p) => (p.$active ? '#4b4b4a' : 'transparent')};
  border-bottom: 2.5px solid ${(p) => (p.$plain ? 'transparent' : '#76b2e4')};
  border-top: 2.5px solid transparent;
`;

const Tray = styled.div`
  margin-left: auto;
  display: flex;
  align-items: center;
`;

const Clock = styled.div`
  width: 72px;
  font-size: 10.5px;
  line-height: 15px;
  text-align: center;
  letter-spacing: -0.4px;
`;

const DesktopEdge = styled.div`
  width: 4px;
  height: 33px;
  border-left: 1px solid #666;
`;

export default function App() {
  return (
    <Window>
      <GlobalStyle />
      <Header />
      <RibbonBar />
      <Workspace>
        <ThumbPane>
          <Thumb n={22}><SineLoadSlide /></Thumb>
          <Thumb n={23} active><GroundSlide small /></Thumb>
          <Thumb n={24} star><SingularitySlide /></Thumb>
          <Thumb n={25}><Slide small number={25} /></Thumb>
        </ThumbPane>
        <Scrollbar>
          <ScrollBox><Icon w={6} h={4}>{up}</Icon></ScrollBox>
          <ScrollBox $mt={324} $h={48} />
          <ScrollBox $mt={154}><Icon w={6} h={4}>{down}</Icon></ScrollBox>
        </Scrollbar>
        <EditArea>
          <SlideShadow><GroundSlide /></SlideShadow>
          <IBeam width="7" height="13" viewBox="0 0 7 13" fill="none" stroke="#333">
            <path d="M0 .5h2.500l1 1 1-1H7M0 12.500h2.500l1-1 1 1H7M3.500 1v11" strokeWidth=".8" />
          </IBeam>
        </EditArea>
        <Scrollbar $ml={1}>
          <ScrollBox><Icon w={6} h={4}>{up}</Icon></ScrollBox>
          <ScrollBox $mt={313.5} $h={13} />
          <ScrollBox $mt={153}><Icon w={6} h={4}>{down}</Icon></ScrollBox>
          <ScrollBox $flat $mt={2}><Icon w={6} h={7} color="#666"><path d="M0 3l3-3 3 3zM0 6l3-3 3 3z" fill="#666" stroke="none" /><path d="M0 6.500h6" /></Icon></ScrollBox>
          <ScrollBox $flat $mt={1}><Icon w={6} h={7} color="#666"><path d="M0 1l3 3 3-3zM0 4l3 3 3-3z" fill="#666" stroke="none" /><path d="M0 .5h6" /></Icon></ScrollBox>
        </Scrollbar>
      </Workspace>
      <StatusBar>
        <Slot $w={72}><Text $size={9.5} $ls={-0.5}>SLIDE 23 OF 34</Text></Slot>
        <Icon w={12} h={10} color="#f2c5be"><path d="M.5.5H5l1 1V9L5 8.500H.5zM6 1.500l1-1h4.500v8H7L6 9M8 3l2.500 3M10.500 3L8 6" /></Icon>
        <StatusRight>
          <Slot $w={13}><Icon w={9} h={9} color="#f6d5d0"><path d="M0 4.500h9M0 6.500h9M0 8.500h9" /><path d="M1.500 3.500L4.500 0l3 3.500z" fill="#f6d5d0" stroke="none" /></Icon></Slot>
          <Slot $w={40}><Text $size={9.5} $ls={-0.5}>NOTES</Text></Slot>
          <Slot $w={14}><svg width="11" height="10" viewBox="0 0 11 10"><path d="M0 0h11v7H7l-3 3V7H0z" fill="#fff" /></svg></Slot>
          <Slot $w={62}><Text $size={9.5} $ls={-0.5}>COMMENTS</Text></Slot>
          <ViewButton $active><Icon w={10} h={9} color="#fff"><path d="M.5.5h9v8h-9zM3 .5v8M4.500 2.500H8M4.500 4.500H8M3 6.500h6" /></Icon></ViewButton>
          <ViewButton><svg width="10" height="9" viewBox="0 0 10 9"><path d="M0 0h4v4H0zM6 0h4v4H6zM0 5h4v4H0zM6 5h4v4H6z" fill="#fff" /></svg></ViewButton>
          <ViewButton><Icon w={10} h={9} color="#f3c9c3"><path d="M.5 1H4l1 1 1-1h3.500v7H6L5 9 4 8H.5zM5 2v7M2 3h1.500M2 5h1.500M6.500 3H8M6.500 5H8" /></Icon></ViewButton>
          <ViewButton><Icon w={10} h={9} color="#f9e3e0"><path d="M0 1h10M1.500 1v4h7V1M5 5v3M3 8.500h4" /></Icon></ViewButton>
          <Slot $w={10} $justify="flex-end"><Icon w={7} h={8} color="#fff" sw={1.5}><path d="M0 4h7" /></Icon></Slot>
          <ZoomTrack><i /><b /></ZoomTrack>
          <Slot $w={18}><Icon w={8} h={8} color="#fff" sw={1.5}><path d="M0 4h8M4 0v8" /></Icon></Slot>
          <Slot $w={23}><Text $size={9.5} $ls={-0.5}>89%</Text></Slot>
        </StatusRight>
      </StatusBar>
      <Taskbar>
        <Task $plain $w={46} $pl={13}>
          <svg width="14" height="14" viewBox="0 0 14 14"><path d="M0 2l6-.8v5.400H0zM6.800 1L14 0v6.600H6.800zM0 7.400h6v5.400L0 12zM6.800 7.400H14V14l-7.200-1z" fill="#f4f4f4" /></svg>
        </Task>
        <Task $w={127} $pl={7} $gap={8}>
          <svg width="13" height="16" viewBox="0 0 13 16"><path d="M0 1h7l1-1h4v14H2L0 15z" fill="#f2d577" /><path d="M0 1l4 1v14l-4-1z" fill="#fbe9a5" /><path d="M7 11l6 1v3H7z" fill="#e5bd51" /></svg>
          <Text $size={10.6} $ls={-0.6}>MOM</Text>
        </Task>
        <Task $plain $w={45} $pl={15}>
          <svg width="18" height="18" viewBox="0 0 18 18">
            <circle cx="9" cy="9" r="9" fill="#f3c11d" />
            <path d="M9 9L1.200 4.500A9 9 0 0116.800 4.500z" fill="#de4335" />
            <path d="M1.200 4.500A9 9 0 009 18l3.800-7L9 9z" fill="#229a4f" />
            <path d="M1.200 4.500L5 11l4-6h8A9 9 0 001.200 4.500z" fill="#de4335" />
            <circle cx="9" cy="9" r="4.300" fill="#fff" />
            <circle cx="9" cy="9" r="3.500" fill="#4285f4" />
          </svg>
        </Task>
        <Task $active $w={133} $pl={10}>
          <PowerPointIcon size={17} />
          <Text $size={10.6} $ls={-0.62}>5_beams [Compati...</Text>
        </Task>
        <Task $w={127} $ml={4} $pl={6}>
          <PowerPointIcon size={17} />
          <Text $size={10.6} $ls={-0.6}>10 - PowerPoint</Text>
        </Task>
        <Task $w={127} $ml={7} $pl={8} $gap={6}>
          <svg width="14" height="18" viewBox="0 0 14 18">
            <path d="M0 0h10l4 4v14H0z" fill="#fff" />
            <path d="M10 0l4 4h-4z" fill="#e05a50" />
            <path d="M3 11q4-3 4-7 1 4 5 5-5-.5-9 2z" fill="none" stroke="#dd2c20" strokeWidth="1.200" />
            <text x="2" y="17" fontSize="5" fontWeight="700" fill="#333">PDF</text>
          </svg>
          <Text $size={10.6} $ls={-0.62}>1 Mechanics_of_Ma...</Text>
        </Task>
        <Tray>
          <Slot $w={21}><Icon w={11} h={6} color="#eee" sw={1.2}><path d="M.5 5.500l5-5 5 5" /></Icon></Slot>
          <Slot $w={20}><svg width="9" height="14" viewBox="0 0 9 14"><rect x="1.500" width="6" height="11" rx="1.500" fill="#eee" /><path d="M0 10h9M4.500 11v2.500M2 13.500h5" stroke="#eee" /></svg></Slot>
          <Slot $w={18}><Icon w={10} h={13} color="#eee"><rect x=".5" y="3.500" width="7" height="6.500" rx="1.500" /><path d="M7.500 6l2-1.500v4.500l-2-1.500M2 1.500q3-1.500 5 0M2 12q3 1.500 5 0" /></Icon></Slot>
          <Slot $w={20}>
            <svg width="14" height="13" viewBox="0 0 14 13"><path d="M3 10q-4-1-2.500-4Q2 4 4 4.500 6 0 10 3q4 1 3 5l-3 2z" fill="#c9c9c9" /><path d="M9.500 4.500l4 7.500H5.500z" fill="#f2c230" /><path d="M9.500 7v3M9.500 10.500v1" stroke="#333" /></svg>
          </Slot>
          <Slot $w={22}><Icon w={13} h={10} color="#eee"><path d="M3.500 3h8v6h-7V6M11.500 5h1v2h-1M0 1h4v3H1V1" /><path d="M6 4.500h4v3H6z" fill="#eee" stroke="none" /></Icon></Slot>
          <Slot $w={18}><Icon w={12} h={12} color="#bbb"><path d="M1 9Q2 2 11 1M3.500 10Q4 5 11 4M6 11q1-4 5-4M9 11.500q0-2 2-2" /></Icon></Slot>
          <Slot $w={23}><Icon w={14} h={12} color="#eee"><path d="M.5 4H3l3-3v10L3 8H.5zM8 4q1 2 0 4M10 2.500q2 3.500 0 7M12 1q3 5 0 10" /></Icon></Slot>
          <Slot $w={13}><Icon w={14} h={13} color="#eee"><path d="M4 9l7-8 2 2-8 7-2 .5zM4 6q-4 1-3 4t5 2 3-5 4-1 1 4-4 1" /></Icon></Slot>
          <Clock>11:36 AM<br />12-Jan-21</Clock>
          <Slot $w={32} $justify="flex-start">
            <svg width="15" height="15" viewBox="0 0 15 15" style={{ marginLeft: 2 }}><path d="M0 1h14v11H8l-2 2.500V12H0z" fill="#f2f2f2" /><path d="M3 4h8M3 6.500h8M3 9h4" stroke="#333" /><path d="M9 12q1-4 4-4-1 3 1 5-3 1-5-1z" fill="#555" /></svg>
          </Slot>
          <DesktopEdge />
        </Tray>
      </Taskbar>
    </Window>
  );
}
